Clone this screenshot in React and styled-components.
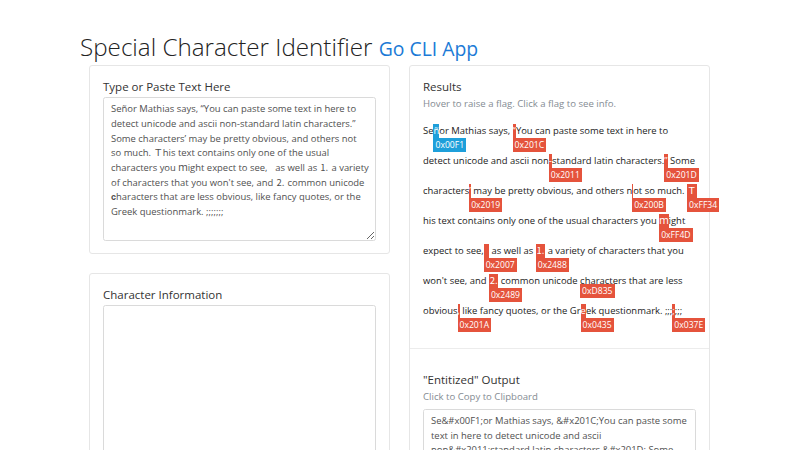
import React from "react";
import styled, { createGlobalStyle } from "styled-components";

const GlobalStyle = createGlobalStyle`
  body {
    margin: 0;
    background: #fff;
    color: #222;
    font-family: "Open Sans", "Noto Sans CJK SC", "DejaVu Sans", sans-serif;
  }
`;

const Page = styled.div`
  width: 640px;
  margin: 0 auto;
  padding-top: 32px;
`;

const Title = styled.h1`
  margin: 0;
  font-size: 24.2px;
  font-weight: 300;
  line-height: 1.2;
  color: #222;
`;

const SubTitle = styled.small`
  font-size: 19.4px;
  font-weight: 400;
  color: #1b7ad6;
`;

const Row = styled.div`
  display: grid;
  grid-template-columns: 301px 301px;
  column-gap: 19px;
  padding: 0 9px;
  margin-top: 4px;
  align-items: start;
`;

const Column = styled.div`
  display: flex;
  flex-direction: column;
  gap: 19px;
`;

const Card = styled.div`
  border: 1px solid #e6e6e6;
  border-radius: 3px;
  background: #fff;
`;

const CardBody = styled.div`
  padding: ${(p) => p.$top || 14}px 13px ${(p) => p.$bottom || 12}px;
  & + & {
    border-top: 1px solid #ececec;
  }
`;

const CardTitle = styled.h5`
  margin: 0 0 ${(p) => p.$gap || 4}px;
  font-size: 11.5px;
  font-weight: 400;
  line-height: 1.15;
  color: #333;
`;

const Muted = styled.p`
  margin: 2px 0 4px;
  font-size: 9.6px;
  line-height: 14.7px;
  color: #858c93;
`;

const TextBox = styled.textarea`
  display: block;
  box-sizing: border-box;
  width: 100%;
  height: ${(p) => p.$height}px;
  margin: 0;
  padding: 4px 6px 4px 7px;
  border: 1px solid #dadada;
  border-radius: 2.5px;
  font-family: inherit;
  font-size: 9.45px;
  line-height: 14.7px;
  color: #505050;
  background: #fff;
  resize: vertical;
  outline: none;
`;

const Lines = styled.div`
  font-size: 9.45px;
  color: #222;
  padding-bottom: 10px;
`;

const Line = styled.div`
  height: 30px;
  line-height: 30px;
  white-space: nowrap;
`;

const Flag = styled.span`
  position: relative;
  display: inline-block;
  min-width: ${(p) => p.$pole || 1}px;
  margin-right: ${(p) => (p.$pole ? -p.$pole : 0)}px;
  line-height: 14px;
  color: #fff;
  background: ${(p) => (p.$active ? "#1e9fda" : "#e5533c")};
  vertical-align: baseline;
`;

const FlagLabel = styled.span`
  position: absolute;
  top: 100%;
  left: 0;
  padding: 0 2px;
  font-size: 8.6px;
  line-height: 14px;
  white-space: nowrap;
  color: #fff;
  background: inherit;
`;

const source =
  "Señor Mathias says, \u201CYou can paste some text in here to detect unicode and ascii non\u2011standard latin characters.\u201D Some characters\u2019 may be pretty obvious, and others n\u200Bot so much. \uFF34his text contains only one of the usual characters you \uFF4Dight expect to see,\u2007 as well as \u2488 a variety of characters that you won't see, and \u2489 common unicode \uD835\uDC1Characters that are less obvious\u201A like fancy quotes, or the Gr\u0435ek questionmark. ;;;\u037E;;;";

const entitize = (text) => {
  let out = "";
  for (let i = 0; i < text.length; i++) {
    const code = text.charCodeAt(i);
    out +=
      code > 126
        ? "&#x" + code.toString(16).toUpperCase().padStart(4, "0") + ";"
        : text[i];
  }
  return out;
};

const f = (ch, code, extra = {}) => ({ ch, code, ...extra });

const results = [
  ["Se", f("ñ", "0x00F1", { active: true }), "or Mathias says, ", f("\u201C", "0x201C"), "You can paste some text in here to"],
  ["detect unicode and ascii non", f("\u2011", "0x2011"), "standard latin characters.", f("\u201D", "0x201D"), " Some"],
  ["characters", f("\u2019", "0x2019"), " may be pretty obvious, and others n", f("\u200B", "0x200B"), "ot so much. ", f("\uFF34", "0xFF34")],
  ["his text contains only one of the usual characters you ", f("\uFF4D", "0xFF4D"), "ight"],
  ["expect to see,", f("\u2007", "0x2007"), " as well as ", f("\u2488", "0x2488"), " a variety of characters that you"],
  ["won't see, and ", f("\u2489", "0x2489"), " common unicode ", f("", "0xD835", { pole: 3 }), "characters that are less"],
  ["obvious", f("\u201A", "0x201A"), " like fancy quotes, or the Gr", f("\u0435", "0x0435"), "ek questionmark. ;;;", f(";", "0x037E"), ";;;"],
];

export default function App() {
  return (
    <>
      <GlobalStyle />
      <Page>
        <Title>
          Special Character Identifier <SubTitle>Go CLI App</SubTitle>
        </Title>
        <Row>
          <Column>
            <Card>
              <CardBody>
                <CardTitle>Type or Paste Text Here</CardTitle>
                <TextBox $height={144} defaultValue={source} />
              </CardBody>
            </Card>
            <Card>
              <CardBody>
                <CardTitle>Character Information</CardTitle>
                <TextBox $height={220} readOnly />
              </CardBody>
            </Card>
          </Column>
          <Card>
            <CardBody>
              <CardTitle $gap={0}>Results</CardTitle>
              <Muted>Hover to raise a flag. Click a flag to see info.</Muted>
              <Lines>
                {results.map((parts, i) => (
                  <Line key={i}>
                    {parts.map((p, j) =>
                      typeof p === "string" ? (
                        p
                      ) : (
                        <Flag key={j} $active={p.active} $pole={p.pole}>
                          {p.ch}
                          <FlagLabel>{p.code}</FlagLabel>
                        </Flag>
                      )
                    )}
                  </Line>
                ))}
              </Lines>
            </CardBody>
            <CardBody $top={24}>
              <CardTitle $gap={0}>"Entitized" Output</CardTitle>
              <Muted>Click to Copy to Clipboard</Muted>
              <TextBox $height={120} readOnly value={entitize(source)} />
            </CardBody>
          </Card>
        </Row>
      </Page>
    </>
  );
}
